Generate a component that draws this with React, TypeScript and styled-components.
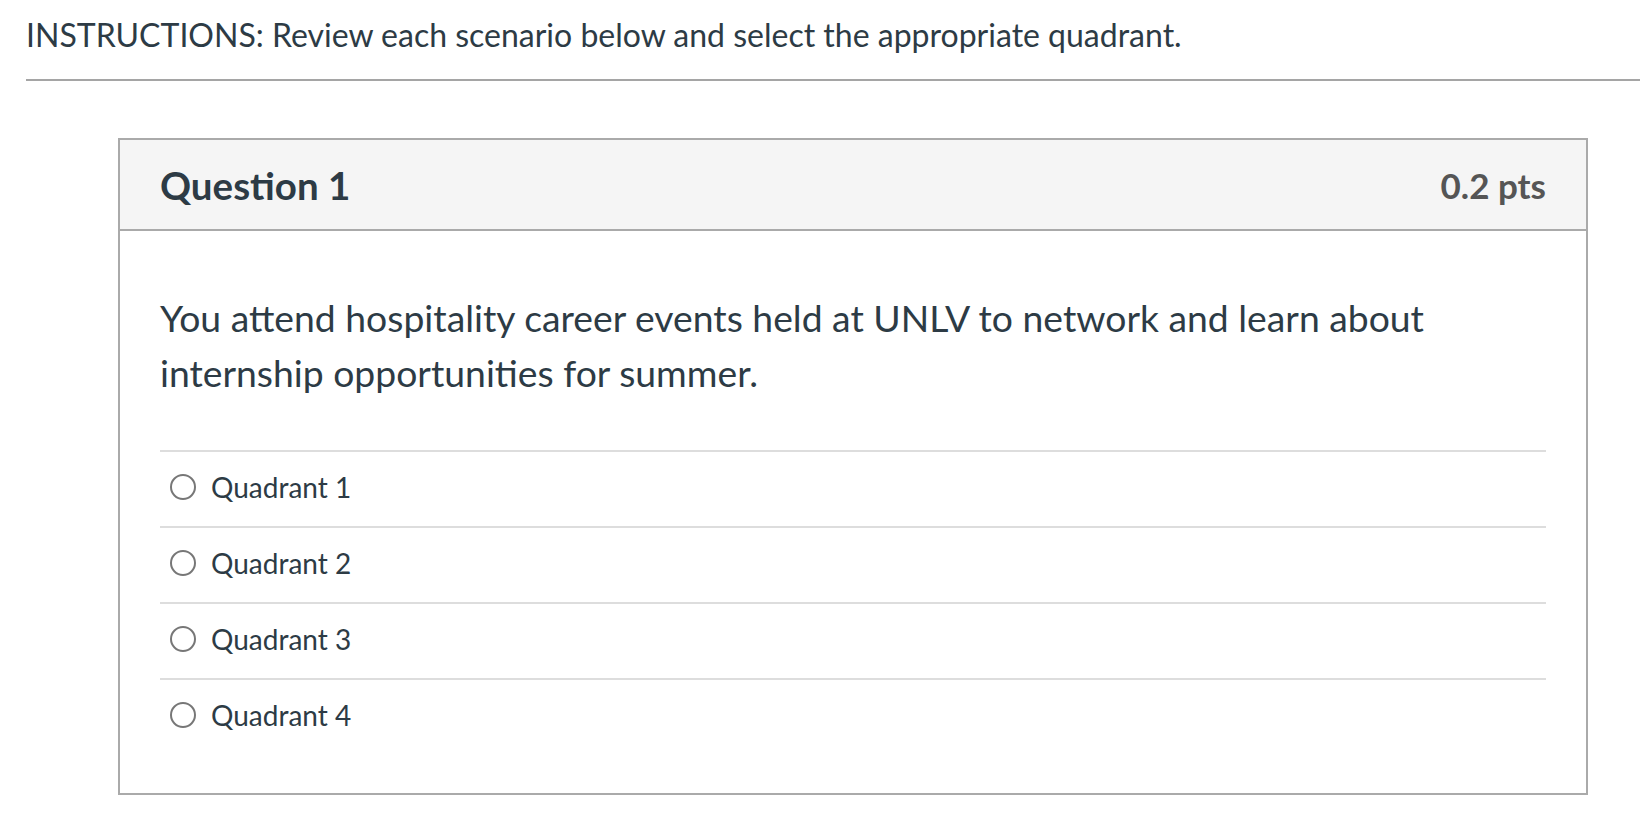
import React from "react";
import styled, { createGlobalStyle } from "styled-components";

const GlobalStyle = createGlobalStyle`
  html, body {
    margin: 0;
    padding: 0;
    background: #ffffff;
  }
  body {
    font-family: Lato, "Open Sans", "Liberation Sans", sans-serif;
    color: #2d3b45;
    overflow: hidden;
  }
`;

const Page = styled.div`
  width: 1640px;
  height: 820px;
  padding-left: 26px;
  box-sizing: border-box;
`;

const Instructions = styled.p`
  margin: 0;
  padding-top: 16px;
  height: 79px;
  box-sizing: border-box;
  font-size: 32px;
  line-height: 38px;
  color: #2d3b45;
`;

const Rule = styled.hr`
  margin: 0;
  border: 0;
  border-top: 2px solid #a5a5a5;
  height: 0;
`;

const Card = styled.section`
  margin: 57px 0 0 92px;
  width: 1470px;
  border: 2px solid #aaaaaa;
  box-sizing: border-box;
`;

const Header = styled.header`
  display: flex;
  align-items: center;
  justify-content: space-between;
  height: 91px;
  box-sizing: border-box;
  padding: 0 40px 0 40px;
  background: #f5f5f5;
  border-bottom: 2px solid #aaaaaa;
`;

const QuestionName = styled.h2`
  margin: 0;
  font-size: 38.5px;
  font-weight: 700;
  color: #2d3b45;
`;

const Points = styled.span`
  font-size: 35px;
  font-weight: 700;
  color: #555555;
`;

const Body = styled.div`
  padding: 59px 40px 39px 40px;
`;

const QuestionText = styled.p`
  margin: 0 0 50px 0;
  font-size: 37.3px;
  line-height: 55px;
  color: #2d3b45;
`;

const Answers = styled.div`
  display: flex;
  flex-direction: column;
`;

const Answer = styled.label`
  display: flex;
  align-items: center;
  gap: 15px;
  height: 76px;
  box-sizing: border-box;
  padding: 0 0 4px 10px;
  border-top: 2px solid #dddddd;
  font-size: 28px;
  color: #2d3b45;
  cursor: pointer;
`;

const Radio = styled.span`
  display: inline-block;
  width: 26px;
  height: 26px;
  box-sizing: border-box;
  border: 2px solid #777777;
  border-radius: 50%;
  background: #ffffff;
`;

const options = ["Quadrant 1", "Quadrant 2", "Quadrant 3", "Quadrant 4"];

export default function App() {
  return (
    <>
      <GlobalStyle />
      <Page>
        <Instructions>
          INSTRUCTIONS: Review each scenario below and select the appropriate quadrant.
        </Instructions>
        <Rule />
        <Card>
          <Header>
            <QuestionName>Question 1</QuestionName>
            <Points>0.2 pts</Points>
          </Header>
          <Body>
            <QuestionText>
              You attend hospitality career events held at UNLV to network and learn about
              <br />
              internship opportunities for summer.
            </QuestionText>
            <Answers>
              {options.map((o) => (
                <Answer key={o}>
                  <Radio />
                  {o}
                </Answer>
              ))}
            </Answers>
          </Body>
        </Card>
      </Page>
    </>
  );
}
